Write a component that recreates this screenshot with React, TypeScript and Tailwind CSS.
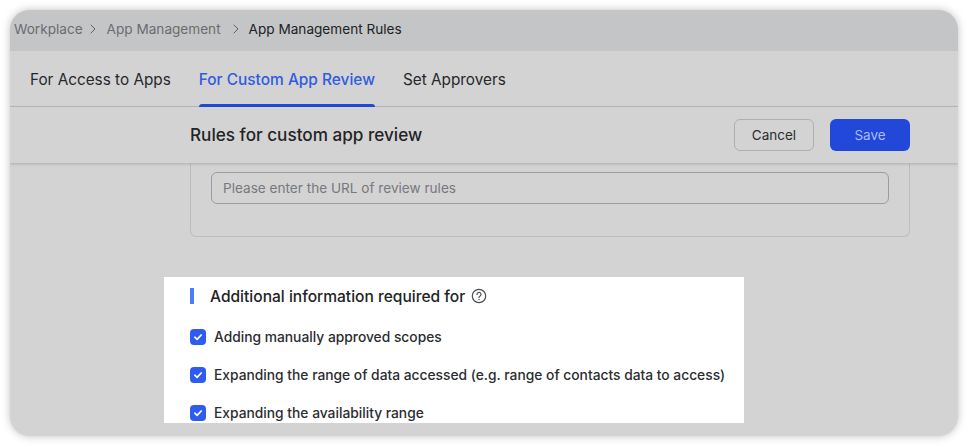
import React from 'react';
import { ChevronRight } from 'lucide-react';

const options = [
  'Adding manually approved scopes',
  'Expanding the range of data accessed (e.g. range of contacts data to access)',
  'Expanding the availability range',
];

const Check = () => (
  <span className="flex h-4 w-4 shrink-0 items-center justify-center rounded-[4px] bg-[#2f5cf0]">
    <svg width="10" height="10" viewBox="0 0 10 10" fill="none">
      <path d="M1.8 5.2 4.1 7.3 8.2 3" stroke="#fff" strokeWidth="1.7" strokeLinecap="round" strokeLinejoin="round" />
    </svg>
  </span>
);

export default function App() {
  return (
    <div className="h-[447px] w-[968px] overflow-hidden bg-white pl-[10px] pt-[10px] font-['Inter',sans-serif]">
      <div className="flex h-[426px] w-[948px] flex-col overflow-hidden rounded-[20px] bg-[#d3d3d3] shadow-[0_0_8px_rgba(0,0,0,0.25)]">
        <div className="flex h-[41px] shrink-0 items-center bg-[#c4c5c7] pb-[3px] pl-1 text-[13.6px] text-[#6a6c70]">
          <span>Workplace</span>
          <ChevronRight size={16} strokeWidth={1.5} className="ml-[2px] mr-[6px] text-[#5f6165]" />
          <span>App Management</span>
          <ChevronRight size={16} strokeWidth={1.5} className="ml-[7px] mr-[5px] text-[#5f6165]" />
          <span className="text-[#202124]">App Management Rules</span>
        </div>

        <div className="flex h-[56px] shrink-0 gap-7 border-b border-[#b9b9ba] pl-5 pt-[2px] text-[15.3px] text-[#26282b]">
          <div className="flex items-center pt-[1px]">For Access to Apps</div>
          <div className="relative flex items-center text-[15.45px] font-medium text-[#2f5ce0]">
            For Custom App Review
            <span className="absolute bottom-[-1px] left-0 right-0 h-[3px] rounded-t-sm bg-[#2148d8]" />
          </div>
          <div className="flex items-center pt-[1px]">Set Approvers</div>
        </div>

        <div className="z-10 flex h-[56px] shrink-0 items-center justify-between bg-[#d3d3d3] pl-[180px] pr-[48px] shadow-[0_1px_3px_rgba(0,0,0,0.18)]">
          <h1 className="text-[17.15px] font-medium text-[#222427]">Rules for custom app review</h1>
          <div className="flex gap-4">
            <button className="h-8 w-20 rounded-md border border-[#aeafb1] text-[13.5px] text-[#2b2d30]">Cancel</button>
            <button className="h-8 w-20 rounded-md bg-[#2148d8] text-[13.5px] text-[#a9bcf2]">Save</button>
          </div>
        </div>

        <div className="ml-[180px] mr-[48px] flex h-[74px] shrink-0 rounded-b-md border border-t-0 border-[#bcbcbd] px-5 pt-[9px]">
          <div className="flex h-8 w-full items-center rounded-md border border-[#9b9c9f] px-[11px] text-[13.6px] text-[#77797d]">
            Please enter the URL of review rules
          </div>
        </div>

        <div className="ml-[154px] mt-10 flex h-[146px] w-[580px] shrink-0 flex-col overflow-hidden bg-white pl-[26px]">
          <div className="flex h-[38px] shrink-0 items-center">
            <span className="h-4 w-1 bg-[#4f7cff]" />
            <span className="ml-4 pt-[2px] text-[15.55px] font-medium leading-none text-[#222427]">Additional information required for</span>
            <svg width="16" height="16" viewBox="0 0 16 16" fill="none" className="ml-[6px] text-[#4c4e52]">
              <circle cx="8" cy="8" r="6.7" stroke="currentColor" strokeWidth="1.2" />
              <path d="M6 6.4a2 2 0 1 1 3.1 1.6c-.7.4-1.1.7-1.1 1.5" stroke="currentColor" strokeWidth="1.2" strokeLinecap="round" />
              <circle cx="8" cy="11.5" r=".75" fill="currentColor" />
            </svg>
          </div>
          <div className="mt-[13px] flex flex-col gap-5">
            {options.map((label) => (
              <div key={label} className="flex h-[18px] items-center gap-2 text-[13.8px] font-medium text-[#2b2d30]">
                <Check />
                <span>{label}</span>
              </div>
            ))}
          </div>
        </div>
      </div>
    </div>
  );
}
